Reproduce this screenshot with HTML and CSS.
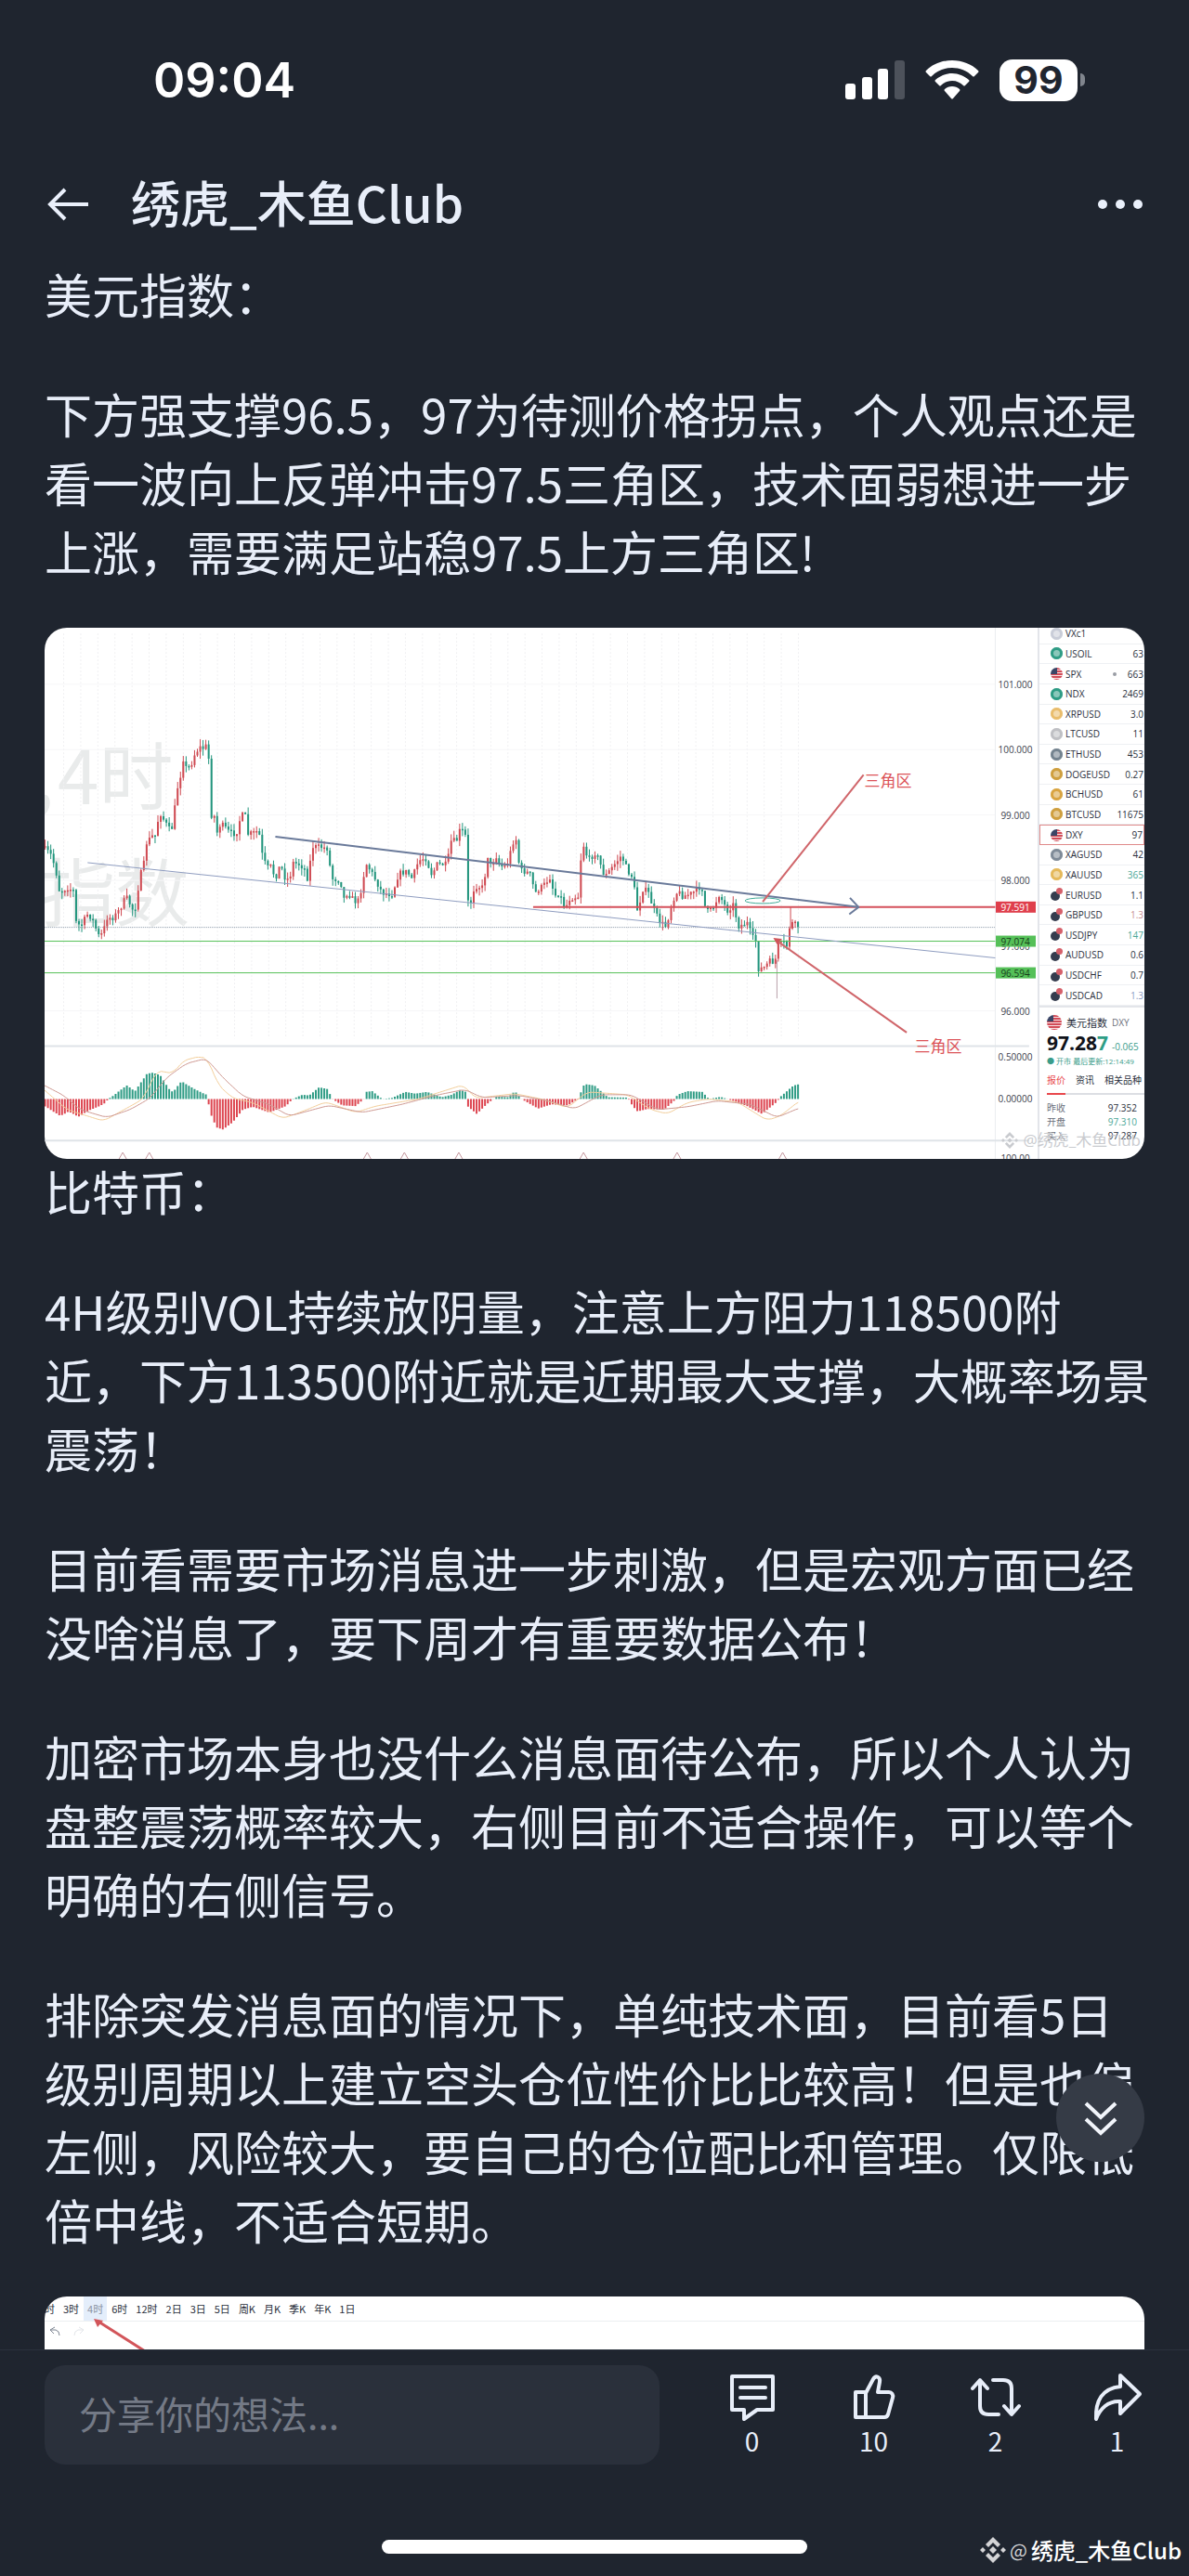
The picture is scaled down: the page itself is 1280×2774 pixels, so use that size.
FILE: index.html
```html
<!DOCTYPE html>
<html lang="zh-CN">
<head>
    <meta charset="UTF-8">
    <meta name="viewport" content="width=device-width, initial-scale=1.0">
    <title>绣虎_木鱼Club</title>
    <link rel="stylesheet" href="styles.css">
</head>
<body>
    <div class="app">
        <div class="status-bar">
            <span class="time">09:04</span>
            <div class="status-icons">
                <svg width="64" height="42" viewBox="0 0 64 42" fill="#fff">
                    <rect x="0" y="25" width="11" height="17" rx="3"/>
                    <rect x="18" y="18" width="11" height="24" rx="3"/>
                    <rect x="35" y="9" width="11" height="33" rx="3"/>
                    <rect x="53" y="0" width="11" height="42" rx="3" fill="#4d525b"/>
                </svg>
                <svg width="58" height="42" viewBox="0 0 58 42" fill="#fff">
                    <path d="M29 0C18 0 8 4 1 11q-1 1 0 2l4 4q1 1 2 0C13 11 21 8 29 8s16 3 22 9q1 1 2 0l4-4q1-1 0-2C50 4 40 0 29 0z"/>
                    <path d="M29 14c-7 0-13 3-18 7q-1 1 0 2l4 4q1 1 2 0c3-3 7-5 12-5s9 2 12 5q1 1 2 0l4-4q1-1 0-2c-5-4-11-7-18-7z"/>
                    <path d="M29 28c-3 0-6 1-8 3q-1 1 0 2l7 8q1 1 2 0l7-8q1-1 0-2c-2-2-5-3-8-3z"/>
                </svg>
                <div class="battery"><span class="battery-level">99</span></div>
            </div>
        </div>

        <header class="header">
            <button class="icon-btn" aria-label="返回">
                <svg width="46" height="36" viewBox="0 0 46 36" fill="none" stroke="#eaf0fb" stroke-width="4">
                    <path d="M44 18H3M19 2L3 18l16 16"/>
                </svg>
            </button>
            <h1 class="title">绣虎_木鱼Club</h1>
            <button class="icon-btn" aria-label="更多">
                <svg width="50" height="12" viewBox="0 0 50 12" fill="#eaf0fb">
                    <circle cx="6" cy="6" r="5"/>
                    <circle cx="25" cy="6" r="5"/>
                    <circle cx="44" cy="6" r="5"/>
                </svg>
            </button>
        </header>

        <main class="article">
            <p>美元指数：</p>
            <p>下方强支撑96.5，97为待测价格拐点，个人观点还是看一波向上反弹冲击97.5三角区，技术面弱想进一步上涨，需要满足站稳97.5上方三角区!</p>

            <figure class="card chart-card">
                <svg id="chart" class="chart" viewBox="0 0 1069 572" preserveAspectRatio="none"></svg>
                <div class="side">
                    <ul id="watchlist" class="watchlist"></ul>
                    <div class="quote">
                        <div class="quote-name"><i class="coin flag big"></i>美元指数<small>DXY</small></div>
                        <div class="quote-price">97.28<em>7</em><small>-0.065</small></div>
                        <div class="quote-state">● 开市 最后更新:12:14:49</div>
                        <div class="quote-tabs"><b>报价</b><span>资讯</span><span>相关品种</span></div>
                        <dl class="quote-data">
                            <dt>昨收</dt><dd>97.352</dd>
                            <dt>开盘</dt><dd class="teal">97.310</dd>
                            <dt>买入</dt><dd>97.287</dd>
                        </dl>
                    </div>
                </div>
                <div class="mark mark-chart">
                    <svg width="18" height="18" viewBox="0 0 28 28"><use href="#diamond"/></svg>
                    <span>@绣虎_木鱼Club</span>
                </div>
            </figure>

            <p class="after-card">比特币：</p>
            <p>4H级别VOL持续放阴量，注意上方阻力118500附近，下方113500附近就是近期最大支撑，大概率场景震荡！</p>
            <p>目前看需要市场消息进一步刺激，但是宏观方面已经没啥消息了，要下周才有重要数据公布！</p>
            <p>加密市场本身也没什么消息面待公布，所以个人认为盘整震荡概率较大，右侧目前不适合操作，可以等个明确的右侧信号。</p>
            <p>排除突发消息面的情况下，单纯技术面，目前看5日级别周期以上建立空头仓位性价比比较高！但是也偏左侧，风险较大，要自己的仓位配比和管理。仅限低倍中线，不适合短期。</p>

            <figure class="card next-card">
                <div class="periods">
                    <span>时</span><span>3时</span><span class="active">4时</span><span>6时</span><span>12时</span><span>2日</span><span>3日</span><span>5日</span><span>周K</span><span>月K</span><span>季K</span><span>年K</span><span>1日</span>
                </div>
                <svg class="next-arrow" width="120" height="70" viewBox="0 0 120 70" fill="none">
                    <path d="M6 36l5-3M6 36l4 4M6 36h6q4 1 4 6" stroke="#7d8491"/>
                    <path d="M42 36l-5-3M42 36l-4 4M42 36h-6q-4 1-4 6" stroke="#e3e5e9"/>
                    <path d="M116 64L58 27" stroke="#d2555a" stroke-width="3"/>
                    <path d="M53 24l10 2-6 7z" fill="#d2555a"/>
                </svg>
            </figure>
        </main>

        <footer class="footer">
            <div class="actions">
                <input class="comment-input" type="text" placeholder="分享你的想法..." aria-label="分享你的想法">
                <button class="action">
                    <svg width="54" height="54" viewBox="0 0 54 54">
                        <path d="M5 5h44v36H32L18 51V41H5z"/>
                        <path d="M14 17h27M14 28h27"/>
                    </svg>
                    <span>0</span>
                </button>
                <button class="action">
                    <svg width="54" height="54" viewBox="0 0 54 54">
                        <path d="M7 22h11v27H7zM18 23l8-15c3-5 8-2 7 3l-2 11h12c3 0 5 3 4 6l-5 18q-1 3-4 3H18"/>
                    </svg>
                    <span>10</span>
                </button>
                <button class="action">
                    <svg width="54" height="54" viewBox="0 0 54 54">
                        <path d="M2 18l8-9 8 9M10 11v26q0 9 9 9h11M24 9h11q9 0 9 9v26M36 37l8 9 8-9"/>
                    </svg>
                    <span>2</span>
                </button>
                <button class="action">
                    <svg width="54" height="54" viewBox="0 0 54 54">
                        <path d="M30 4l21 20-21 21V32C17 31 8 40 4 51C3 31 11 18 30 16z"/>
                    </svg>
                    <span>1</span>
                </button>
            </div>
            <div class="home-bar"></div>
            <div class="mark mark-page">
                <svg width="28" height="28" viewBox="0 0 28 28"><use href="#diamond"/></svg>
                <span>@</span><b>绣虎_木鱼Club</b>
            </div>
            <button class="scroll-btn" aria-label="下一条">
                <svg width="40" height="44" viewBox="0 0 40 44" fill="none" stroke="#f2f5fb" stroke-width="4">
                    <path d="M4 6l16 15L36 6M4 23l16 15L36 23"/>
                </svg>
            </button>
        </footer>
    </div>

    <svg class="defs" width="0" height="0">
        <symbol id="diamond" viewBox="0 0 28 28">
            <path fill="currentColor" d="M14 0l8 8-3 3-5-5-5 5-3-3zM14 28l8-8-3-3-5 5-5-5-3 3zM14 10l4 4-4 4-4-4zM3 11l3 3-3 3-3-3zM25 11l3 3-3 3-3-3z"/>
        </symbol>
    </svg>

    <script src="chart.js"></script>
</body>
</html>
```
FILE: styles.css
```css
* {
    box-sizing: border-box;
}
body {
    margin: 0;
    background-color: #1f252f;
    color: #e8eef9;
    font-family: "Noto Sans CJK SC", sans-serif;
}
button {
    padding: 0;
    border: none;
    background: none;
    color: inherit;
    font-family: inherit;
    cursor: pointer;
}
.app {
    display: flex;
    flex-direction: column;
    height: 100vh;
    overflow: hidden;
}

/* 状态栏 */
.status-bar {
    display: flex;
    flex: none;
    align-items: center;
    justify-content: space-between;
    height: 172px;
    padding: 0 112px 0 165px;
    color: #fff;
    font-family: Inter, sans-serif;
}
.time {
    font-size: 52px;
    font-weight: 600;
}
.status-icons {
    display: flex;
    align-items: center;
    gap: 22px;
}
.battery {
    display: flex;
    align-items: center;
    gap: 3px;
}
.battery::after {
    content: "";
    width: 5px;
    height: 14px;
    border-radius: 0 5px 5px 0;
    background-color: #80858d;
}
.battery-level {
    width: 84px;
    height: 45px;
    border-radius: 14px;
    background-color: #fff;
    color: #1f252f;
    font-size: 41px;
    font-weight: 700;
    line-height: 45px;
    text-align: center;
}

/* 标题栏 */
.header {
    display: flex;
    flex: none;
    align-items: center;
    height: 96px;
    padding: 0 49px 0 51px;
}
.icon-btn {
    display: flex;
}
.title {
    flex: 1;
    margin: 0 0 0 44px;
    padding-bottom: 6px;
    font-size: 53px;
    font-weight: 500;
    line-height: 74px;
}

/* 正文 */
.article {
    flex: 1;
    min-height: 0;
    overflow: hidden;
    padding: 11px 48px 0;
    font-size: 51px;
    line-height: 74px;
}
.article p {
    margin: 0 -8px 55px 0;
}
.article .card {
    margin: -9px 0 0;
}
.article .after-card {
    margin-top: -3px;
}
.card {
    position: relative;
    overflow: hidden;
    border-radius: 24px;
    background-color: #fff;
    color: #2a2f3c;
}
.chart-card {
    display: flex;
    aspect-ratio: 1184 / 572;
    font-family: "Open Sans", "Noto Sans CJK SC", sans-serif;
}
.chart {
    flex: 1;
    min-width: 0;
    height: 100%;
}
.chart .axis {
    font-size: 10px;
    fill: #3b404c;
    text-anchor: middle;
}
.chart .note {
    font-family: "Noto Sans CJK SC", sans-serif;
    font-size: 17px;
    fill: #dc5358;
    text-anchor: middle;
}
.chart .ghost {
    font-family: "Noto Sans CJK SC", sans-serif;
    font-size: 80px;
    fill: #e9ebeb;
}

/* 自选列表 */
.side {
    display: flex;
    flex: none;
    flex-direction: column;
    width: 115px;
    border-left: 2px solid #e3e5ea;
}
.watchlist {
    display: grid;
    flex: none;
    grid-auto-rows: 1fr;
    height: 413px;
    margin: -4px 0 0;
    padding: 0;
    border-bottom: 2px solid #e3e5ea;
    list-style: none;
}
.watchlist li {
    display: flex;
    align-items: center;
    gap: 3px;
    padding-left: 12px;
    border-bottom: 1px solid #eef0f3;
    font-size: 10px;
    line-height: 14px;
}
.watchlist .selected {
    border: 1px solid #e08a8a;
    padding-left: 11px;
}
.watchlist .open::after {
    content: "";
    display: inline-block;
    width: 4px;
    height: 4px;
    margin: 0 0 2px 34px;
    border-radius: 50%;
    background-color: #9a9da5;
}
.watchlist .value {
    margin-left: auto;
    padding-right: 1px;
}
.coin {
    position: relative;
    flex: none;
    width: 13px;
    height: 13px;
    border-radius: 50%;
    background-color: var(--coin);
    box-shadow: inset 0 0 0 3px var(--coin), inset 0 0 0 7px #ffffff70;
}
.coin.flag {
    background: linear-gradient(#3b4566, #3b4566) 0 0 / 7px 7px no-repeat, repeating-linear-gradient(#d24b57 0 2px, #f6dfe1 2px 3px);
    box-shadow: none;
}
.coin.big {
    width: 16px;
    height: 16px;
}
.coin.pair {
    width: 10px;
    height: 10px;
    margin: 3px 3px 0 0;
    box-shadow: none;
}
.coin.pair::after {
    content: "";
    position: absolute;
    top: -4px;
    left: 6px;
    width: 7px;
    height: 7px;
    border-radius: 50%;
    background-color: #d5606a;
}
.teal {
    color: #4ba797;
}
.rose {
    color: #c98f93;
}
.blue {
    color: #8b9cc4;
}

/* 报价面板 */
.quote {
    padding: 5px 0 0 8px;
    white-space: nowrap;
    font-size: 10px;
    line-height: 15px;
}
.quote-name {
    display: flex;
    align-items: center;
    gap: 5px;
    height: 22px;
    font-size: 11px;
}
.quote-name small {
    color: #6b707b;
    font-size: 10px;
}
.quote-price {
    height: 22px;
    color: #10131a;
    font-size: 21px;
    font-weight: 700;
    line-height: 22px;
}
.quote-price em {
    color: #2f9e86;
    font-style: normal;
}
.quote-price small {
    margin-left: 4px;
    color: #3a9c8a;
    font-size: 10px;
    font-weight: 400;
}
.quote-state {
    height: 18px;
    color: #3a9c8a;
    font-size: 8px;
    line-height: 18px;
}
.quote-tabs {
    display: flex;
    gap: 11px;
    height: 27px;
    border-bottom: 2px solid #dcdee3;
    line-height: 23px;
}
.quote-tabs b {
    height: 27px;
    border-bottom: 2px solid #e8484c;
    color: #e8484c;
    font-weight: 400;
}
.quote-data {
    display: grid;
    grid-template-columns: 1fr auto;
    margin: 7px 8px 0 0;
    color: #2a2f3c;
}
.quote-data dt {
    color: #6b707b;
}
.quote-data dd {
    margin: 0;
}
.quote-data .teal {
    color: #4ba797;
}

/* 水印 */
.mark {
    position: absolute;
    display: flex;
    align-items: center;
    white-space: nowrap;
}
.mark-chart {
    right: 4px;
    bottom: 8px;
    gap: 5px;
    color: #c9cbcf;
    font-size: 17px;
    line-height: 24px;
}
.mark-page {
    right: 8px;
    bottom: 10px;
    gap: 4px;
    color: #d4d4d6;
    font-size: 24px;
    line-height: 36px;
}
.mark-page span {
    font-size: 20px;
}
.mark-page b {
    color: #fff;
    font-weight: 500;
}

.next-card {
    height: 300px;
}
.periods {
    display: flex;
    gap: 9px;
    height: 27px;
    border-bottom: 1px solid #eceef1;
    font-size: 11px;
    line-height: 27px;
}
.periods .active {
    color: #8b93a3;
    background-color: #e4eefb;
    box-shadow: -4px 0 #e4eefb, 4px 0 #e4eefb;
}
.next-arrow {
    position: absolute;
    top: 0;
    left: 0;
}

/* 底部操作栏 */
.footer {
    position: relative;
    display: flex;
    flex: none;
    flex-direction: column;
    height: 244px;
    border-top: 1px solid #2b313c;
    padding: 16px 12px 24px 48px;
}
.actions {
    display: flex;
    align-items: center;
}
.comment-input {
    flex: 1;
    min-width: 0;
    height: 107px;
    margin-right: 34px;
    padding: 0 37px 6px;
    border: none;
    border-radius: 22px;
    background-color: #2a303b;
    color: #e8eef9;
    font-family: inherit;
    font-size: 41px;
}
.comment-input::placeholder {
    color: #747a86;
    opacity: 1;
}
.action {
    display: flex;
    flex: none;
    flex-direction: column;
    align-items: center;
    width: 131px;
    font-size: 28px;
    line-height: 40px;
}
.action svg {
    fill: none;
    stroke: #e8eef9;
    stroke-width: 4px;
    stroke-linejoin: round;
    stroke-linecap: round;
}
.home-bar {
    width: 458px;
    height: 15px;
    margin: auto auto 0 363px;
    border-radius: 8px;
    background-color: #fff;
}
.scroll-btn {
    position: absolute;
    right: 48px;
    bottom: 446px;
    display: flex;
    align-items: center;
    justify-content: center;
    width: 95px;
    height: 95px;
    border-radius: 50%;
    background-color: #353b46;
}
.defs {
    position: absolute;
}
```
FILE: chart.js
```js
const RED = '#cf4a52';
const GREEN = '#22957d';

// 数据坐标 -> 画布坐标
const X = v => v / 2.8 - 8;
const Y = v => (v - 44) / 2.613;

// 收盘价走势
const price = [
    22,665, 40,680, 55,720, 68,790, 90,775, 112,785, 118,880, 135,880, 150,850, 165,860, 185,910, 198,905,
    210,860, 230,860, 250,835, 268,800, 290,840, 300,825, 308,740, 320,725, 326,655, 345,630, 358,630, 368,560,
    385,590, 398,610, 412,605, 418,495, 430,490, 436,400, 450,440, 462,435, 475,400, 490,380, 505,385, 516,360,
    520,570, 535,575, 540,640, 545,600, 560,600, 580,620, 600,625, 615,570, 628,575, 635,625, 655,620, 668,615,
    678,680, 692,720, 705,715, 718,750, 733,710, 750,755, 762,745, 772,705, 790,710, 805,720, 815,750, 830,660,
    850,660, 875,665, 888,750, 915,755, 922,810, 935,790, 950,805, 965,820, 980,770, 990,705, 1010,735, 1040,790,
    1070,795, 1090,735, 1115,730, 1130,750, 1150,700, 1170,690, 1190,740, 1205,710, 1235,710, 1248,645, 1270,640,
    1275,605, 1294,635, 1298,815, 1310,815, 1318,770, 1345,775, 1358,685, 1368,715, 1385,685, 1395,715, 1415,715,
    1437,640, 1449,640, 1453,725, 1485,735, 1501,790, 1530,765, 1551,740, 1556,800, 1574,790, 1591,835, 1606,805,
    1631,800, 1638,700, 1648,655, 1661,700, 1684,675, 1696,705, 1711,745, 1736,715, 1761,685, 1781,730, 1799,750,
    1804,850, 1814,825, 1826,780, 1841,785, 1856,830, 1876,870, 1896,885, 1916,810, 1931,785, 1946,800, 1976,790,
    2003,770, 2016,845, 2036,835, 2056,795, 2081,840, 2101,820, 2111,885, 2141,875, 2156,915, 2166,925, 2171,1005,
    2191,1000, 2211,980, 2224,990, 2230,935, 2256,930, 2261,945, 2266,890, 2276,875, 2298,885
];

// MACD 柱
const hist = [
    22,-20, 40,-30, 70,-48, 95,-35, 125,-50, 150,-35, 200,-15, 215,0, 230,10, 270,38, 295,22, 330,70, 345,74,
    370,68, 400,25, 410,20, 435,50, 470,30, 510,12, 516,0, 518,-30, 540,-80, 560,-86, 590,-65, 620,-30, 650,-22,
    700,-38, 750,-20, 770,0, 800,12, 820,10, 850,33, 875,28, 890,0, 920,-18, 960,-20, 985,0, 990,20, 1010,22,
    1040,0, 1070,3, 1110,20, 1140,15, 1175,20, 1220,5, 1250,12, 1275,26, 1292,20, 1297,-20, 1325,-42, 1355,-15,
    1375,0, 1385,7, 1420,5, 1440,22, 1460,0, 1510,-27, 1550,-15, 1600,-18, 1625,-3, 1636,0, 1640,25, 1650,42,
    1680,38, 1720,5, 1780,4, 1795,-20, 1810,-35, 1840,-28, 1890,-30, 1920,-5, 1930,12, 1960,22, 2005,20, 2025,0,
    2060,6, 2100,-6, 2140,-20, 2185,-42, 2230,-8, 2240,6, 2280,38, 2298,42
];

const fast = [
    22,1345, 90,1400, 200,1432, 320,1370, 360,1290, 410,1298, 440,1262, 490,1250, 515,1258, 545,1330, 590,1368,
    650,1380, 740,1425, 800,1405, 870,1378, 960,1408, 1020,1390, 1150,1370, 1200,1355, 1285,1330, 1320,1368,
    1440,1355, 1520,1370, 1600,1395, 1630,1370, 1660,1350, 1780,1358, 1850,1400, 1900,1412, 1960,1380, 2020,1370,
    2110,1378, 2200,1430, 2240,1418, 2298,1375
];
const slow = [
    22,1332, 80,1360, 130,1400, 210,1422, 280,1400, 340,1368, 390,1310, 450,1270, 510,1256, 560,1310, 620,1362,
    700,1385, 760,1418, 880,1388, 980,1408, 1100,1385, 1200,1360, 1290,1343, 1340,1366, 1450,1360, 1540,1375,
    1620,1398, 1700,1358, 1790,1358, 1870,1400, 1960,1392, 2050,1375, 2150,1385, 2230,1422, 2298,1395
];

// 线性插值
function valueAt(list, x) {
    for (let i = 0; i < list.length - 2; i += 2) {
        if (x <= list[i + 2]) {
            const t = (x - list[i]) / (list[i + 2] - list[i]);
            return list[i + 1] + t * (list[i + 3] - list[i + 1]);
        }
    }
    return list[list.length - 1];
}

let seed = 7;
function random() {
    seed = (seed * 16807) % 2147483647;
    return seed / 2147483647;
}

let out = '';

function line(x1, y1, x2, y2, color, width = 1, extra = '') {
    out += `<line x1="${X(x1)}" y1="${Y(y1)}" x2="${X(x2)}" y2="${Y(y2)}" stroke="${color}" stroke-width="${width}" ${extra}/>`;
}

function curve(list, color) {
    let d = `M${X(list[0])} ${Y(list[1])}`;
    for (let x = 30; x <= 2298; x += 8) {
        const y = (valueAt(list, x - 12) + valueAt(list, x) + valueAt(list, Math.min(x + 12, 2298))) / 3;
        d += `L${X(x)} ${Y(x < 40 ? valueAt(list, x) : y)}`;
    }
    out += `<path d="${d}" fill="none" stroke="${color}"/>`;
}

function drawChart() {
    // 背景文字
    out += '<text class="ghost" x="-12" y="190">,</text><text class="ghost" x="14" y="190">4时</text><text class="ghost" x="-4" y="315">指数</text>';

    // 网格
    for (let x = 80; x < 2300; x += 51.5) {
        line(x, 60, x, 1200, '#f0f0f2', 1, 'stroke-dasharray="2 2"');
    }
    [203, 387, 571, 755, 939, 1122].forEach(y => line(22, y, 2888, y, '#f6f6f8'));
    line(2888, 44, 2888, 1540, '#ebedf0');
    line(22, 887, 2888, 887, '#8d9aa8', 1, 'stroke-dasharray="1 1"');

    // K线
    let last = 660;
    for (let x = 24; x <= 2298; x += 8.5) {
        const close = valueAt(price, x) + (random() - 0.5) * 16;
        const color = close < last ? RED : GREEN;
        const top = Math.min(last, close);
        const bottom = Math.max(last, close, top + 4);
        line(x, top - random() * 20, x, bottom + random() * 20, color, 1);
        line(x, top, x, bottom, color, 2);
        last = close;
    }
    line(2230, 980, 2230, 1087, '#b9a3ab');
    line(2271, 828, 2271, 890, RED);

    // 水平线与趋势线
    line(22, 926, 2888, 926, '#55c058');
    line(22, 1015, 2888, 1015, '#55c058');
    line(1495, 830, 2888, 830, '#d4505a', 2);
    line(152, 705, 2888, 973, '#8f9dc0');
    line(718, 632, 2476, 830, '#6a7a9a', 2);
    out += `<path d="M${X(2450)} ${Y(804)}L${X(2476)} ${Y(830)}L${X(2448)} ${Y(850)}" fill="none" stroke="#6a7a9a" stroke-width="2"/>`;
    out += `<ellipse cx="${X(2187)}" cy="${Y(812)}" rx="19" ry="3" fill="none" stroke="#41ac98"/>`;
    line(2187, 815, 2491, 458, '#d0656a', 2);
    line(2230, 925, 2621, 1183, '#d0656a', 2);
    out += `<path d="M${X(2219)} ${Y(917)}l9 1-5 6z" fill="#d0555a"/>`;

    // 副图
    line(22, 1221, 2990, 1221, '#dfe3e8', 2);
    line(22, 1487, 2990, 1487, '#dfe3e8', 2);
    for (let x = 24; x <= 2298; x += 8.5) {
        const v = valueAt(hist, x);
        line(x, 1370, x, 1370 - v, v > 0 ? '#2f9c85' : '#dd4651', 2);
    }
    curve(fast, '#f3cf9c');
    curve(slow, '#cf9a93');
    [258, 338, 995, 1107, 1271, 1647, 1929, 2247].forEach(x => {
        out += `<path d="M${X(x) - 4} 572l4-7 4 7" fill="none" stroke="#c3959c"/>`;
    });

    // 坐标轴
    const axis = [['101.000', 203], ['100.000', 387], ['99.000', 571], ['98.000', 755], ['97.000', 939],
        ['96.000', 1122], ['0.50000', 1250], ['0.00000', 1369], ['100.00', 1537]];
    axis.forEach(([label, y]) => {
        out += `<text class="axis" x="1045" y="${Y(y) + 4}">${label}</text>`;
    });
    const tags = [['97.591', 830, '#df3f4c', '#fff'], ['97.074', 926, '#55c058', '#173d1b'], ['96.594', 1015, '#55c058', '#173d1b']];
    tags.forEach(([label, y, bg, color]) => {
        out += `<rect x="1024" y="${Y(y) - 6}" width="43" height="12" fill="${bg}"/>`;
        out += `<text class="axis" x="1045" y="${Y(y) + 4}" style="fill: ${color}">${label}</text>`;
    });

    out += '<text class="note" x="908" y="171">三角区</text><text class="note" x="962" y="457">三角区</text>';
    document.getElementById('chart').innerHTML = out;
}

function drawWatchlist() {
    const rows = [
        ['VXc1', '', '#c9cdd8'], ['USOIL', '63', '#2f9c85'], ['SPX', '663', 'flag'], ['NDX', '2469', '#2f9c85'],
        ['XRPUSD', '3.0', '#e9bd6d'], ['LTCUSD', '11', '#bfc0c4'], ['ETHUSD', '453', '#74838f'],
        ['DOGEUSD', '0.27', '#cf9f3f'], ['BCHUSD', '61', '#d9a441'], ['BTCUSD', '11675', '#cf9f3f'],
        ['DXY', '97', 'flag'], ['XAGUSD', '42', '#7f8b98'], ['XAUUSD', '365', '#e5b95b', 'teal'],
        ['EURUSD', '1.1', 'pair'], ['GBPUSD', '1.3', 'pair', 'rose'], ['USDJPY', '147', 'pair', 'teal'],
        ['AUDUSD', '0.6', 'pair'], ['USDCHF', '0.7', 'pair'], ['USDCAD', '1.3', 'pair', 'blue']
    ];
    document.getElementById('watchlist').innerHTML = rows.map(([name, value, icon, tone = '']) => {
        const coin = icon[0] === '#'
            ? `<i class="coin" style="--coin: ${icon}"></i>`
            : `<i class="coin ${icon}" style="--coin: #353c4e"></i>`;
        return `<li class="${name === 'DXY' ? 'selected' : ''}">${coin}<span class="${name === 'SPX' ? 'open' : ''}">${name}</span><span class="value ${tone}">${value}</span></li>`;
    }).join('');
}

drawChart();
drawWatchlist();
```
